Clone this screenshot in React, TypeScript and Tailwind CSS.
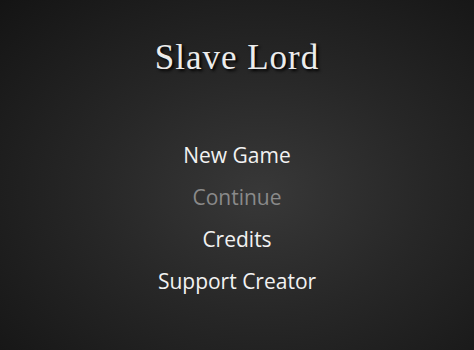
import React from "react";

const items = [
  { label: "New Game", disabled: false },
  { label: "Continue", disabled: true },
  { label: "Credits", disabled: false },
  { label: "Support Creator", disabled: false },
];

export default function App() {
  return (
    <div className="h-[350px] w-full overflow-hidden bg-[radial-gradient(ellipse_at_55%_55%,#383838_0%,#272727_45%,#141414_100%)] flex flex-col items-center">
      <h1
        className="mt-[35px] text-[35px] leading-[46px] text-[#ececec] tracking-[1px] [text-shadow:2px_2px_3px_#000]"
        style={{ fontFamily: '"Liberation Serif", "DejaVu Serif", serif' }}
      >
        Slave Lord
      </h1>
      <ul
        className="mt-[59px] flex flex-col items-center gap-[12px]"
        style={{ fontFamily: '"Open Sans", "Liberation Sans", sans-serif' }}
      >
        {items.map((item) => (
          <li
            key={item.label}
            className={`text-[21px] leading-[30px] ${item.disabled ? "text-[#8a8a8a]" : "text-[#f2f2f2]"}`}
          >
            {item.label}
          </li>
        ))}
      </ul>
    </div>
  );
}
